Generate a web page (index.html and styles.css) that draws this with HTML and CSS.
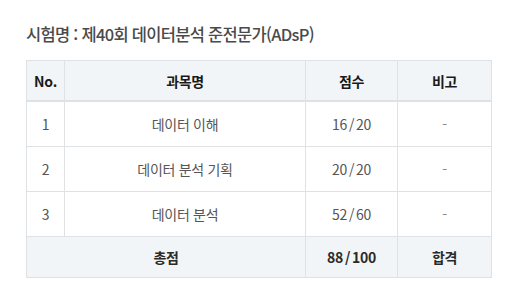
FILE: index.html
```html
<!DOCTYPE html>
<html lang="ko">
<head>
<meta charset="utf-8">
<link rel="stylesheet" href="styles.css">
</head>
<body>
<div class="wrap">
  <h2 class="title">시험명 : 제40회 데이터분석 준전문가(ADsP)</h2>
  <table class="score">
    <colgroup>
      <col class="c-no"><col class="c-subj"><col class="c-score"><col class="c-note">
    </colgroup>
    <thead>
      <tr><th>No.</th><th>과목명</th><th>점수</th><th>비고</th></tr>
    </thead>
    <tbody>
      <tr><td>1</td><td>데이터 이해</td><td class="pt">16 / 20</td><td class="dash">-</td></tr>
      <tr><td>2</td><td>데이터 분석 기획</td><td class="pt">20 / 20</td><td class="dash">-</td></tr>
      <tr><td>3</td><td>데이터 분석</td><td class="pt">52 / 60</td><td class="dash">-</td></tr>
    </tbody>
    <tfoot>
      <tr><th colspan="2">총점</th><th class="pt">88 / 100</th><th>합격</th></tr>
    </tfoot>
  </table>
</div>
</body>
</html>
```
FILE: styles.css
```css
html, body { margin: 0; padding: 0; background: #fff; }
body { font-family: "Noto Sans CJK KR", "Noto Sans", sans-serif; }
.wrap { padding: 21px 26px 0 26px; }
.title {
  margin: 0 0 13px 0;
  font-size: 16.5px;
  font-weight: 500;
  color: #4a4a4a;
  line-height: 26px;
  letter-spacing: -0.7px;
}
.score {
  width: 465px;
  border-collapse: collapse;
  table-layout: fixed;
  font-size: 14px;
  letter-spacing: -0.3px;
}
.c-no { width: 38px; }
.c-subj { width: 241px; }
.c-score { width: 92px; }
.c-note { width: 94px; }
.score th, .score td {
  border: 1px solid #dfe2e5;
  text-align: center;
  padding: 0;
}
.score .pt { word-spacing: -1.6px; }
.score thead th {
  background: #f2f5f7;
  color: #1a1a1a;
  font-weight: 700;
  height: 39px;
  border-bottom: 2px solid #dfe2e5;
}
.score td {
  color: #555;
  height: 44px;
}
.score td.dash { color: #888; }
.score tfoot th {
  background: #f2f5f7;
  color: #2a2a2a;
  font-weight: 700;
  height: 40px;
}
```
